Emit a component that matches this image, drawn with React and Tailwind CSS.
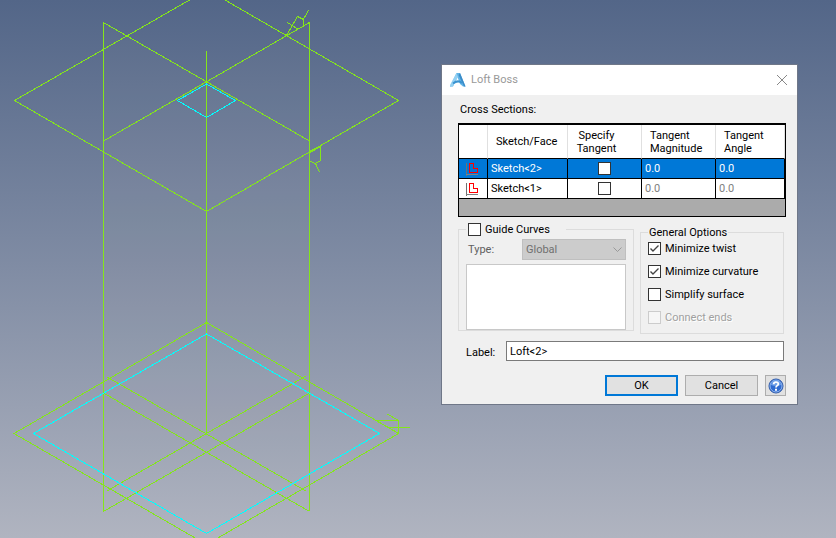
import React from "react";

function Viewport() {
  return (
    <svg className="absolute top-0 left-0" width="836" height="538" viewBox="0 0 836 538" fill="none" shapeRendering="crispEdges" strokeWidth="1" aria-hidden="true">
      <g fill="#b4b4a8" fillOpacity="0.05">
        <path d="M103 22 309 141V511L103 393Z" />
        <path d="M309 22 103 141V511L309 393Z" />
      </g>
      <g stroke="#84e61a">
        <path d="M189.5 0 14.5 100.5 206.5 211.5 398.5 100.5 225 0" />
        <path d="M103.5 22.5 309.5 141M309.5 22.5 103.5 141M103.5 22v489M309.5 22v489" />
        <path d="M206.5 51v382" />
        <path d="M286.5 35.5 297.5 16.5 303.5 19.5V25M308.5 10.5 303.5 19M287.5 22.5 297.5 29" />
        <path d="M309.5 153 320.5 146.5V160.5L315.5 163.5 309.5 161M315.5 163.5 319.5 172M309 151 320 147" />
        <path d="M206.5 322.5 14 433.5 206.5 544.5 398.5 433.5Z" />
        <path d="M107 377 306 491M306 376 107 491M103.5 393 309.5 511.5M309.5 393 103.5 511.5" />
        <path d="M376 420.5H398.5V434M387.5 414 398.5 420.5M389 427.5H410M376 420.5 398 433" />
      </g>
      <path d="M206.5 84 177.5 100.5 206.5 117.5 235.5 100.5ZM206.5 334 33.5 433.5 206.5 533.5 379.5 433.5Z" stroke="#00ffff" />
    </svg>
  );
}

function Logo() {
  return (
    <svg width="16" height="16" viewBox="0 0 16 16" aria-hidden="true">
      <path d="M6.5 1H10L15.5 14.5H13L10 12 7.5 5 3 14.5H0Z" fill="#62b5e8" />
      <path d="M6.5 1 0 13V15L3 14 8 5Z" fill="#93d0f2" />
      <path d="M8.5 3 14 14.5H15.5L10 1Z" fill="#3b8cc8" />
      <path d="M3 11.5Q8 7.5 12 11" fill="none" stroke="#3a93d0" strokeWidth="2" />
    </svg>
  );
}

function SketchIcon() {
  return (
    <svg className="ml-[6px] block" width="14" height="14" viewBox="0 0 14 14" fill="none" shapeRendering="crispEdges" aria-hidden="true">
      <path d="M1.5 1V13.5" stroke="#707070" />
      <path d="M1 12.5H13" stroke="#808080" />
      <path d="M4.5 1.5H8.5V6.5H12.5V10.5H4.5Z" stroke="#ff0000" strokeWidth="1" />
    </svg>
  );
}

function HelpIcon() {
  return (
    <svg className="shrink-0" width="16" height="16" viewBox="0 0 16 16" fill="none" aria-hidden="true">
      <circle cx="8" cy="8" r="7" fill="#2f6bd0" stroke="#2a55a5" />
      <circle cx="8" cy="8" r="6" stroke="#a9c8f5" strokeWidth="0.8" />
      <path d="M3 7a5 5 0 0 1 10 0Q8 9 3 7Z" fill="#6d9fe8" />
      <path d="M5.7 6.2C5.7 3.300 10.3 3.4 10.3 6 10.3 7.6 8 7.7 8 9.5" stroke="white" strokeWidth="1.8" />
      <path d="M7 10.7h2v2H7Z" fill="white" />
    </svg>
  );
}

function Check({ id, label, className = "", ...rest }) {
  return (
    <span className={"flex items-center gap-1 " + className}>
      <span className="relative flex h-[13px] w-[13px] shrink-0">
        <input id={id} type="checkbox" aria-label={label ? undefined : id} className="peer m-0 h-[13px] w-[13px] appearance-none border border-[#333] bg-white disabled:border-[#ccc] disabled:bg-[#f6f6f6]" {...rest} />
        <svg className="pointer-events-none absolute top-0 left-0 hidden peer-checked:block" width="13" height="13" viewBox="0 0 13 13" fill="none" aria-hidden="true">
          <path d="M2.5 6.5 5 9 10.5 3.5" stroke="#444" strokeWidth="1.4" />
        </svg>
      </span>
      {label && <label htmlFor={id} className={rest.disabled ? "text-[#a0a0a0] [text-shadow:1px_1px_0_white]" : ""}>{label}</label>}
    </span>
  );
}

const rows = [
  { name: "Sketch<2>", selected: true },
  { name: "Sketch<1>", selected: false },
];

function SectionsTable() {
  const head = "border-r border-b border-r-[#e0e0e0] border-b-black p-0 font-normal";
  const cell = "border-r border-b border-black p-0";
  return (
    <div className="mt-[6px] h-[94px] border border-t-2 border-black bg-[#ababab]">
      <table className="w-full table-fixed border-separate border-spacing-0 bg-white text-left leading-[13px]">
        <colgroup>
          <col className="w-[29px]" />
          <col className="w-[80px]" />
          <col className="w-[74px]" />
          <col className="w-[74px]" />
          <col />
        </colgroup>
        <thead>
          <tr className="h-[34px]">
            <th className={head}></th>
            <th className={head + " pl-2"}>Sketch/Face</th>
            <th className={head + " pr-4 text-center"}>Specify Tangent</th>
            <th className={head + " pl-2"}>Tangent<br />Magnitude</th>
            <th className={head + " pl-2"}>Tangent<br />Angle</th>
          </tr>
        </thead>
        <tbody>
          {rows.map((r) => (
            <tr key={r.name} className={r.selected ? "h-[20px] bg-[#0078d7] text-white" : "h-[20px]"}>
              <td className={cell}><SketchIcon /></td>
              <td className={cell + " pl-[3px]"}>{r.name}</td>
              <td className={cell}><Check id={"Specify tangent for " + r.name} className="justify-center" /></td>
              <td className={cell + " pl-[3px]" + (r.selected ? "" : " text-[#808080]")}>0.0</td>
              <td className={cell + " pl-[3px]" + (r.selected ? "" : " text-[#808080]")}>0.0</td>
            </tr>
          ))}
        </tbody>
      </table>
    </div>
  );
}

function GuideCurves() {
  return (
    <fieldset className="h-[108px] w-[176px] border border-[#dcdcdc] px-[7px]">
      <legend className="h-[13px] pr-4 pl-[2px] leading-[13px]">
        <Check id="guide" label="Guide Curves" />
      </legend>
      <div className="mt-[3px] flex items-center justify-between pl-[2px] text-[#606060]">
        <label htmlFor="type">Type:</label>
        <span className="relative">
          <select id="type" disabled className="block h-[21px] w-[104px] appearance-none border border-[#bfbfbf] bg-[#ccc] px-[3px] text-[#707070] opacity-100">
            <option>Global</option>
          </select>
          <svg className="pointer-events-none absolute top-2 right-1" width="9" height="6" viewBox="0 0 9 6" fill="none" aria-hidden="true">
            <path d="M.5 .5 4.5 4.5 8.5 .5" stroke="#999" />
          </svg>
        </span>
      </div>
      <div className="mt-1 h-[66px] border border-[#c8c8c8] bg-white" />
    </fieldset>
  );
}

function GeneralOptions() {
  return (
    <fieldset className="mt-[3px] mr-[2px] h-[108px] w-[144px] border border-[#dcdcdc] px-[7px]">
      <legend className="h-[13px] px-[1px] leading-[13px]">General Options</legend>
      <div className="mt-[3px] flex flex-col gap-[10px] leading-[13px]">
        <Check id="twist" label="Minimize twist" defaultChecked />
        <Check id="curvature" label="Minimize curvature" defaultChecked />
        <Check id="simplify" label="Simplify surface" />
        <Check id="connect" label="Connect ends" disabled />
      </div>
    </fieldset>
  );
}

export default function App() {
  return (
    <main className="relative min-h-screen overflow-hidden bg-linear-to-b from-[#536688] to-[#b0b4c0] pt-[64px] font-['Roboto',sans-serif] text-[11px] leading-[14px] text-black">
      <Viewport />
      <section role="dialog" aria-label="Loft Boss" className="relative mr-[38px] ml-auto w-[357px] border border-[#6f7788] bg-[#f0f0f0]">
        <header className="flex h-[30px] items-center bg-white pr-[9px] pl-2 text-[#999]">
          <Logo />
          <h1 className="ml-[5px] grow">Loft Boss</h1>
          <button aria-label="Close" className="p-0">
            <svg width="12" height="12" viewBox="0 0 12 12" fill="none" aria-hidden="true">
              <path d="M1 1 11 11M11 1 1 11" stroke="#888" />
            </svg>
          </button>
        </header>
        <div className="pt-2 pr-[11px] pb-2 pl-4">
          <h2 className="pl-[2px]">Cross Sections:</h2>
          <SectionsTable />
          <div className="mt-[6px] flex items-start justify-between">
            <GuideCurves />
            <GeneralOptions />
          </div>
          <div className="mt-[7px] mr-[2px] flex items-center pl-2">
            <label htmlFor="label" className="w-10 pt-1">Label:</label>
            <input id="label" defaultValue="Loft<2>" className="h-[20px] min-w-0 grow border border-[#7a7a7a] bg-white px-[3px]" />
          </div>
          <div className="mt-[14px] flex justify-end gap-[7px]">
            <button className="h-[21px] w-[73px] border-2 border-[#0078d7] bg-[#e1e1e1] leading-[17px]">OK</button>
            <button className="h-[21px] w-[73px] border border-[#adadad] bg-[#e1e1e1]">Cancel</button>
            <button aria-label="Help" className="flex h-[21px] w-[21px] items-center justify-center border border-[#adadad] bg-[#e1e1e1]">
              <HelpIcon />
            </button>
          </div>
        </div>
      </section>
    </main>
  );
}
